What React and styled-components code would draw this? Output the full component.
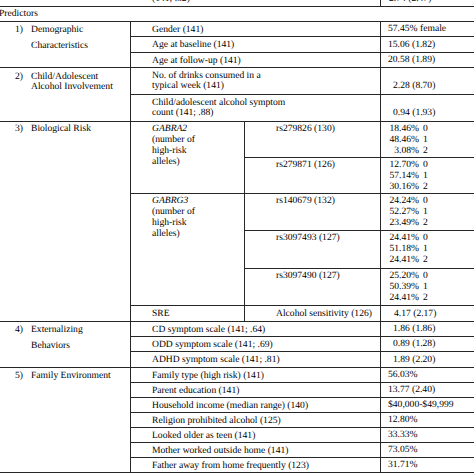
import React from 'react';
import styled, { createGlobalStyle } from 'styled-components';

const RULE = '1px solid #262626';

const Global = createGlobalStyle`
  html, body { margin: 0; padding: 0; background: #fff; }
  body {
    font-family: "Liberation Serif", "Times New Roman", Tinos, serif;
    font-size: 9.6px;
    color: #000;
    text-rendering: geometricPrecision;
  }
  * { box-sizing: border-box; }
`;

const Page = styled.div`
  width: 474px;
  height: 474px;
  overflow: hidden;
  background: #fff;
`;

const Frag = styled.div`
  display: flex;
  height: 7px;
  overflow: hidden;
  border-bottom: ${RULE};
`;

const FragLabel = styled.div`
  flex: 0 0 380px;
  padding-left: 152px;
  line-height: 10px;
  margin-top: -6px;
`;

const FragValue = styled.div`
  flex: 1;
  border-left: ${RULE};
  padding-left: 8px;
  line-height: 10px;
  margin-top: -6px;
  height: 16px;
`;

const SectionRow = styled.div`
  height: 15px;
  line-height: 14px;
  border-bottom: ${RULE};
  margin-left: -1px;
`;

const Category = styled.div`
  display: flex;
`;

const LeftCell = styled.div`
  flex: 0 0 130px;
  display: flex;
  align-items: flex-start;
  border-bottom: ${RULE};
  padding-top: ${(p) => p.$pt || 0}px;
  line-height: ${(p) => p.$lh}px;
`;

const Num = styled.span`
  flex: 0 0 23px;
  text-align: right;
`;

const CatLabel = styled.span`
  padding-left: 8px;
`;

const RightCol = styled.div`
  flex: 1;
  display: flex;
  flex-direction: column;
  border-left: ${RULE};
`;

const Row = styled.div`
  display: flex;
  height: ${(p) => p.$h}px;
  border-bottom: ${RULE};
`;

const WideCell = styled.div`
  flex: 0 0 249px;
  padding-left: 21px;
  display: flex;
  align-items: ${(p) => (p.$multi ? 'flex-start' : 'center')};
  padding-top: ${(p) => (p.$multi ? 3 : 0)}px;
  line-height: ${(p) => (p.$multi ? '10px' : 'normal')};
  white-space: nowrap;
`;

const Value = styled.div`
  flex: 1;
  border-left: ${RULE};
  padding-left: ${(p) => p.$pad || 7}px;
  display: flex;
  align-items: ${(p) => (p.$bottom ? 'flex-end' : 'center')};
  padding-bottom: ${(p) => (p.$bottom ? 3 : 0)}px;
  line-height: 10px;
  white-space: nowrap;
`;

const GeneBlock = styled.div`
  display: flex;
  border-bottom: ${RULE};
`;

const GeneCell = styled.div`
  flex: 0 0 113px;
  padding-left: 21px;
  padding-top: 1px;
  line-height: 11px;
`;

const GeneName = styled.i`
  font-style: italic;
`;

const RsList = styled.div`
  flex: 1;
  display: flex;
  flex-direction: column;
`;

const RsRow = styled.div`
  display: flex;
  height: ${(p) => p.$h}px;
  border-bottom: ${(p) => (p.$last ? 'none' : RULE)};
`;

const RsCell = styled.div`
  flex: 0 0 136px;
  border-left: ${RULE};
  padding-left: 31px;
  padding-top: ${(p) => (p.$center ? 0 : 1)}px;
  line-height: 11px;
  display: flex;
  align-items: ${(p) => (p.$center ? 'center' : 'flex-start')};
  white-space: nowrap;
`;

const Dist = styled.div`
  flex: 1;
  border-left: ${RULE};
  padding-left: 8px;
  padding-top: 1px;
  line-height: 11px;
  white-space: nowrap;
`;

const Pct = styled.span`
  display: inline-block;
  width: 30px;
  text-align: right;
`;

const Allele = styled.span`
  margin-left: 4px;
`;

const SmallCell = styled.div`
  flex: 0 0 113px;
  padding-left: 21px;
  display: flex;
  align-items: center;
`;

const simpleRows1 = [
  ['Gender (141)', '57.45% female', 15, 7],
  ['Age at baseline (141)', '15.06 (1.82)', 16, 7],
  ['Age at follow-up (141)', '20.58 (1.89)', 15, 7],
];

const rows4 = [
  ['CD symptom scale (141; .64)', '1.86 (1.86)', 15],
  ['ODD symptom scale (141; .69)', '0.89 (1.28)', 15],
  ['ADHD symptom scale (141; .81)', '1.89 (2.20)', 16],
];

const rows5 = [
  ['Family type (high risk) (141)', '56.03%'],
  ['Parent education (141)', '13.77 (2.40)'],
  ['Household income (median range) (140)', '$40,000-$49,999'],
  ['Religion prohibited alcohol (125)', '12.80%'],
  ['Looked older as teen (141)', '33.33%'],
  ['Mother worked outside home (141)', '73.05%'],
  ['Father away from home frequently (123)', '31.71%'],
];

const genes = [
  {
    name: 'GABRA2',
    snps: [
      ['rs279826 (130)', ['18.46%', '48.46%', '3.08%'], 36],
      ['rs279871 (126)', ['12.70%', '57.14%', '30.16%'], 36],
    ],
  },
  {
    name: 'GABRG3',
    snps: [
      ['rs140679 (132)', ['24.24%', '52.27%', '23.49%'], 37],
      ['rs3097493 (127)', ['24.41%', '51.18%', '24.41%'], 38],
      ['rs3097490 (127)', ['25.20%', '50.39%', '24.41%'], 37],
    ],
  },
];

function Distribution({ values }) {
  return (
    <Dist>
      {values.map((v, i) => (
        <div key={i}>
          <Pct>{v}</Pct>
          <Allele>{i}</Allele>
        </div>
      ))}
    </Dist>
  );
}

export default function App() {
  return (
    <Page>
      <Global />
      <Frag>
        <FragLabel>(141; .82)</FragLabel>
        <FragValue>2.74 (2.47)</FragValue>
      </Frag>
      <SectionRow>Predictors</SectionRow>

      <Category>
        <LeftCell $lh={15.5}>
          <Num>1)</Num>
          <CatLabel>
            Demographic
            <br />
            Characteristics
          </CatLabel>
        </LeftCell>
        <RightCol>
          {simpleRows1.map(([l, v, h, pad]) => (
            <Row key={l} $h={h}>
              <WideCell>{l}</WideCell>
              <Value $pad={pad}>{v}</Value>
            </Row>
          ))}
        </RightCol>
      </Category>

      <Category>
        <LeftCell $lh={10} $pt={4}>
          <Num>2)</Num>
          <CatLabel>
            Child/Adolescent
            <br />
            Alcohol Involvement
          </CatLabel>
        </LeftCell>
        <RightCol>
          <Row $h={27}>
            <WideCell $multi>
              <span>
                No. of drinks consumed in a
                <br />
                typical week (141)
              </span>
            </WideCell>
            <Value $pad={12} $bottom>
              2.28 (8.70)
            </Value>
          </Row>
          <Row $h={27}>
            <WideCell $multi>
              <span>
                Child/adolescent alcohol symptom
                <br />
                count (141; .88)
              </span>
            </WideCell>
            <Value $pad={12} $bottom>
              0.94 (1.93)
            </Value>
          </Row>
        </RightCol>
      </Category>

      <Category>
        <LeftCell $lh={11} $pt={1}>
          <Num>3)</Num>
          <CatLabel>Biological Risk</CatLabel>
        </LeftCell>
        <RightCol>
          {genes.map((g) => (
            <GeneBlock key={g.name}>
              <GeneCell>
                <GeneName>{g.name}</GeneName>
                <br />
                (number of
                <br />
                high-risk
                <br />
                alleles)
              </GeneCell>
              <RsList>
                {g.snps.map(([rs, vals, h], i) => (
                  <RsRow key={rs} $h={i === g.snps.length - 1 ? h - 1 : h} $last={i === g.snps.length - 1}>
                    <RsCell>{rs}</RsCell>
                    <Distribution values={vals} />
                  </RsRow>
                ))}
              </RsList>
            </GeneBlock>
          ))}
          <Row $h={16}>
            <SmallCell>SRE</SmallCell>
            <RsCell $center>Alcohol sensitivity (126)</RsCell>
            <Value $pad={13}>4.17 (2.17)</Value>
          </Row>
        </RightCol>
      </Category>

      <Category>
        <LeftCell $lh={15.5}>
          <Num>4)</Num>
          <CatLabel>
            Externalizing
            <br />
            Behaviors
          </CatLabel>
        </LeftCell>
        <RightCol>
          {rows4.map(([l, v, h]) => (
            <Row key={l} $h={h}>
              <WideCell>{l}</WideCell>
              <Value $pad={12}>{v}</Value>
            </Row>
          ))}
        </RightCol>
      </Category>

      <Category>
        <LeftCell $lh={15}>
          <Num>5)</Num>
          <CatLabel>Family Environment</CatLabel>
        </LeftCell>
        <RightCol>
          {rows5.map(([l, v]) => (
            <Row key={l} $h={15}>
              <WideCell>{l}</WideCell>
              <Value $pad={7}>{v}</Value>
            </Row>
          ))}
        </RightCol>
      </Category>
    </Page>
  );
}
